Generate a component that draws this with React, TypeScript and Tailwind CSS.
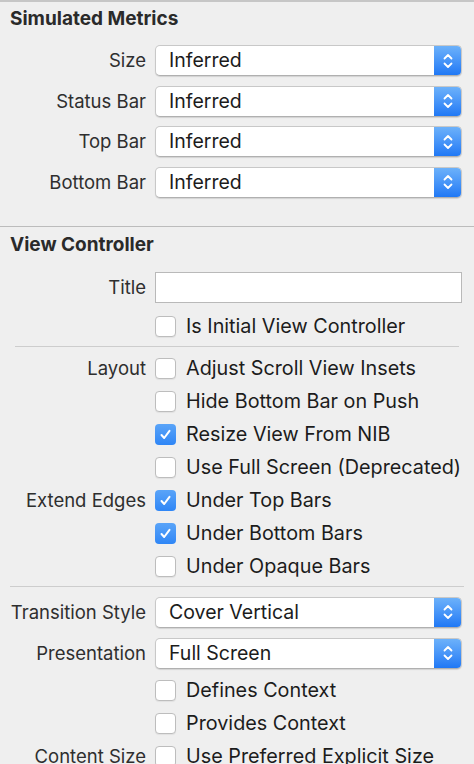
import type { ReactNode } from 'react'

const font = { fontFamily: 'Inter, "Open Sans", Arial, sans-serif' }

function Chevrons(): JSX.Element {
  return (
    <svg width="12" height="20" viewBox="0 0 12 20" fill="none">
      <path d="M2.5 7.5 L6 4 L9.5 7.5" stroke="white" strokeWidth="1.8" strokeLinecap="round" strokeLinejoin="round" />
      <path d="M2.5 12.5 L6 16 L9.5 12.5" stroke="white" strokeWidth="1.8" strokeLinecap="round" strokeLinejoin="round" />
    </svg>
  )
}

function Popup({ value }: { value: string }): JSX.Element {
  return (
    <div className="flex h-[31px] items-stretch overflow-hidden rounded-[5px] border border-[#c8c8c8] border-b-[#b0b0b0] bg-white shadow-[0_1px_1px_rgba(0,0,0,0.12)]">
      <div className="flex flex-1 items-center pl-[13px] pt-px text-[19.5px] text-[#1c1c1c]">{value}</div>
      <div className="flex w-[27px] items-center justify-center bg-gradient-to-b from-[#6cb1fa] to-[#1f78f5]">
        <Chevrons />
      </div>
    </div>
  )
}

function Checkbox({ checked }: { checked?: boolean }): JSX.Element {
  if (checked) {
    return (
      <div className="flex h-[21px] w-[21px] flex-shrink-0 items-center justify-center rounded-[4px] bg-gradient-to-b from-[#5aa4f8] to-[#2e86f6]">
        <svg width="13" height="13" viewBox="0 0 13 13" fill="none">
          <path d="M2.5 7 L5.2 10 L10.5 2.8" stroke="white" strokeWidth="2" strokeLinecap="round" strokeLinejoin="round" />
        </svg>
      </div>
    )
  }
  return (
    <div className="h-[21px] w-[21px] flex-shrink-0 rounded-[4px] border border-[#bdbdbd] bg-white shadow-[0_1px_1px_rgba(0,0,0,0.06)]" />
  )
}

function Row({ label, children, h = 'h-[31px]' }: { label?: string; children: ReactNode; h?: string }): JSX.Element {
  return (
    <div className={`flex items-center ${h}`}>
      <div className="w-[146px] flex-shrink-0 whitespace-nowrap pt-px text-right text-[18.5px] text-[#2e2e2e]">{label}</div>
      <div className="ml-[9px] mr-[12px] flex-1">{children}</div>
    </div>
  )
}

function CheckRow({ label, text, checked }: { label?: string; text: string; checked?: boolean }): JSX.Element {
  return (
    <Row label={label} h="h-[33px]">
      <div className="flex items-center gap-[10px]">
        <Checkbox checked={checked} />
        <span className="whitespace-nowrap pt-px text-[19.8px] text-[#1c1c1c]">{text}</span>
      </div>
    </Row>
  )
}

export default function App(): JSX.Element {
  return (
    <div
      className="h-[764px] w-[474px] overflow-hidden border-t-2 border-[#c6c6c6] bg-[#efefef]"
      style={font}
    >
      {/* Simulated Metrics */}
      <div className="flex h-[35px] items-center pl-[10px] text-[19px] font-bold text-[#2a2a2a]">
        Simulated Metrics
      </div>
      <div className="mt-[8px] flex flex-col gap-[9.5px]">
        <Row label="Size"><Popup value="Inferred" /></Row>
        <Row label="Status Bar"><Popup value="Inferred" /></Row>
        <Row label="Top Bar"><Popup value="Inferred" /></Row>
        <Row label="Bottom Bar"><Popup value="Inferred" /></Row>
      </div>

      <div className="mt-[28px] h-px bg-[#bcbcbc]" />

      {/* View Controller */}
      <div className="flex h-[37px] items-center pl-[10px] text-[19px] font-bold text-[#2a2a2a]">
        View Controller
      </div>
      <div className="mt-[8px]">
        <Row label="Title">
          <div className="h-[31px] border border-[#b9b9b9] bg-white" />
        </Row>
      </div>
      <div className="mt-[7px]">
        <CheckRow text="Is Initial View Controller" />
      </div>
      <div className="mx-[15px] mt-[3px] h-px bg-[#cdcdcd]" />
      <div className="mt-[5px]">
        <CheckRow label="Layout" text="Adjust Scroll View Insets" />
        <CheckRow text="Hide Bottom Bar on Push" />
        <CheckRow text="Resize View From NIB" checked />
        <CheckRow text="Use Full Screen (Deprecated)" />
        <CheckRow label="Extend Edges" text="Under Top Bars" checked />
        <CheckRow text="Under Bottom Bars" checked />
        <CheckRow text="Under Opaque Bars" />
      </div>
      <div className="mx-[10px] mt-[3px] h-px bg-[#cdcdcd]" />
      <div className="mt-[10px] flex flex-col gap-[10px]">
        <Row label="Transition Style"><Popup value="Cover Vertical" /></Row>
        <Row label="Presentation"><Popup value="Full Screen" /></Row>
      </div>
      <div className="mt-[5px]">
        <CheckRow text="Defines Context" />
        <CheckRow text="Provides Context" />
        <CheckRow label="Content Size" text="Use Preferred Explicit Size" />
      </div>
    </div>
  )
}
